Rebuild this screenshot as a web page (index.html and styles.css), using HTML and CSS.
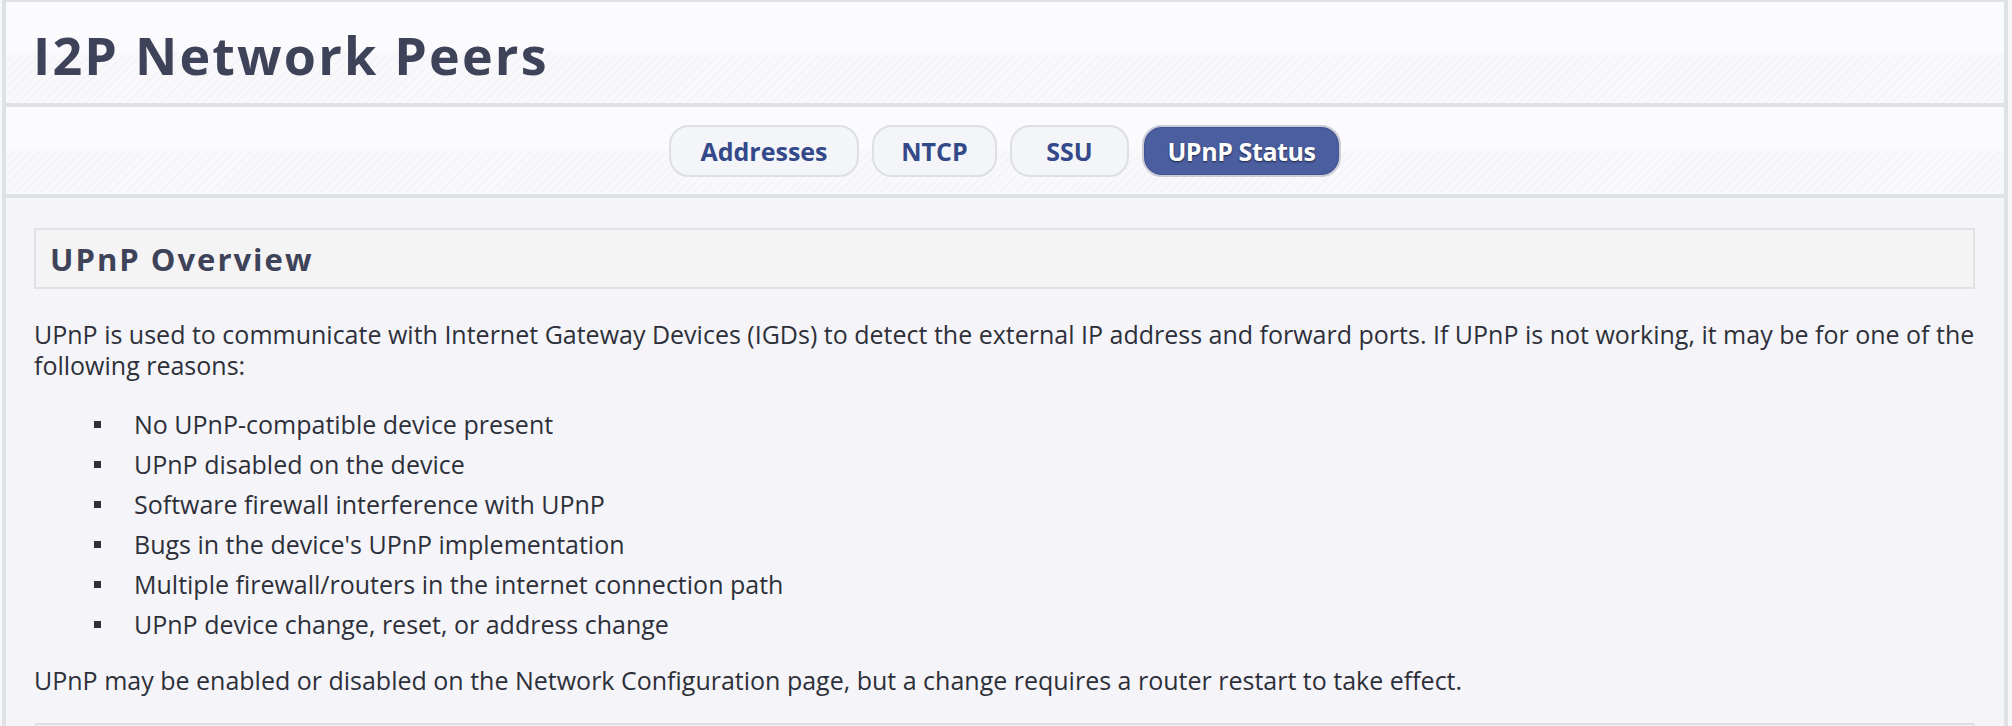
FILE: index.html
```html
<!DOCTYPE html>
<html lang="en">
<head>
<meta charset="utf-8">
<title>I2P Network Peers</title>
<link rel="stylesheet" href="styles.css">
</head>
<body>
<div class="page">
  <header class="titlebar">
    <h1 class="page-title">I2P Network Peers</h1>
  </header>
  <nav class="tabs">
    <a class="tab tab-addresses" href="#">Addresses</a>
    <a class="tab tab-ntcp" href="#">NTCP</a>
    <a class="tab tab-ssu" href="#">SSU</a>
    <a class="tab tab-upnp tab-active" href="#">UPnP Status</a>
  </nav>
  <main class="content">
    <h3 class="section-title">UPnP Overview</h3>
    <p class="para para-first">UPnP is used to communicate with Internet Gateway Devices (IGDs) to detect the external IP address and forward ports. If UPnP is not working, it may be for one of the following reasons:</p>
    <ul class="reasons">
      <li class="reason">No UPnP-compatible device present</li>
      <li class="reason">UPnP disabled on the device</li>
      <li class="reason">Software firewall interference with UPnP</li>
      <li class="reason">Bugs in the device's UPnP implementation</li>
      <li class="reason">Multiple firewall/routers in the internet connection path</li>
      <li class="reason">UPnP device change, reset, or address change</li>
    </ul>
    <p class="para para-last">UPnP may be enabled or disabled on the Network Configuration page, but a change requires a router restart to take effect.</p>
    <div class="next-box"></div>
  </main>
</div>
</body>
</html>
```

FILE: styles.css
```css
html, body {
  margin: 0;
  padding: 0;
  background: #f7f7fa;
}

body {
  font-family: "Open Sans", "Noto Sans", "DejaVu Sans", sans-serif;
  color: #2e3039;
  height: 726px;
  overflow: hidden;
}

.page {
  margin: 0 4px 0 2px;
  border: 4px solid #dee1e6;
  border-top-width: 2px;
  border-bottom: none;
  background: #f5f5f9;
  height: 724px;
  overflow: hidden;
}

.titlebar,
.tabs {
  background:
    linear-gradient(#fbfbfe, #fbfbfe) top left / 100% 50% no-repeat,
    repeating-linear-gradient(135deg, #f5f5f9 0 2px, #f9f9fc 2px 6px);
  border-bottom: 4px solid #dee1e6;
  box-sizing: border-box;
}

.titlebar {
  height: 105px;
  padding: 27px 0 0 27px;
}

.page-title {
  margin: 0;
  font-size: 52px;
  line-height: 52px;
  font-weight: 700;
  letter-spacing: 2.2px;
  color: #3e4359;
}

.tabs {
  height: 91px;
  display: flex;
  justify-content: center;
  align-items: flex-start;
  gap: 13px;
  padding-top: 18px;
}

.tab {
  display: inline-flex;
  align-items: center;
  justify-content: center;
  height: 52px;
  box-sizing: border-box;
  padding: 0;
  border: 2px solid #dcdfe4;
  border-radius: 20px;
  background: #f4f5f9;
  color: #34498a;
  font-size: 25px;
  font-weight: 700;
  text-decoration: none;
}

.tab-addresses { width: 190px; }
.tab-ntcp { width: 125px; }
.tab-ssu { width: 119px; }
.tab-upnp { width: 199px; letter-spacing: -0.4px; }

.tab-active {
  background: #4b5e9f;
  border-color: #c9ccd6;
  color: #ffffff;
  text-shadow: 0 1px 2px #1c2440;
  box-shadow: inset 0 0 2px #2e3b70;
}

.content {
  padding: 30px 29px 0 28px;
}

.section-title {
  margin: 0;
  height: 61px;
  box-sizing: border-box;
  padding: 14px 14px 0 14px;
  border: 2px solid #e0e2e6;
  background: #f4f4f5;
  font-size: 31px;
  line-height: 31px;
  font-weight: 700;
  letter-spacing: 2px;
  color: #3e4359;
}

.para {
  margin: 0;
  font-size: 25px;
  line-height: 31px;
}

.para-first {
  margin-top: 30px;
}

.reasons {
  list-style: none;
  margin: 23px 0 0 0;
  padding: 0;
}

.reason {
  display: flex;
  align-items: center;
  font-size: 25px;
  line-height: 40px;
}

.reason::before {
  content: "";
  flex: none;
  width: 7px;
  height: 7px;
  background: #2e3039;
  margin: 0 33px 0 60px;
}

.para-last {
  margin-top: 21px;
}

.next-box {
  margin-top: 27px;
  height: 20px;
  border: 2px solid #dcdfe4;
  border-radius: 3px 3px 0 0;
  background: #f4f4f5;
}
```
